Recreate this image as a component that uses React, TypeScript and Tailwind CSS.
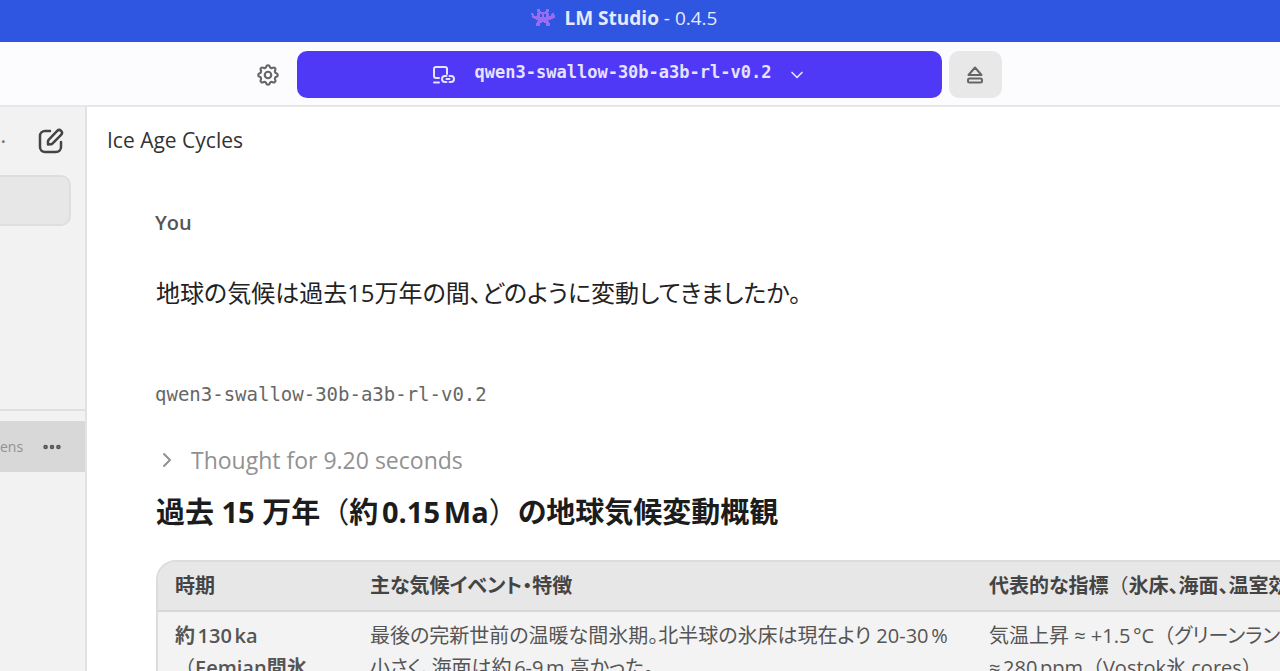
import { ChevronDown, ChevronRight, Ellipsis } from "lucide-react";
import { TbSettings } from "react-icons/tb";

const MODEL = "qwen3-swallow-30b-a3b-rl-v0.2";

function InvaderIcon() {
  return (
    <svg viewBox="0 0 24 18" className="h-[18px] w-6 text-[#9a6cf2]" fill="currentColor" aria-hidden="true">
      <path
        fillRule="evenodd"
        d="M6 0h3v2h1v1h4V2h1V0h3v3h-1v1h1v3h2V5h1V4h2v2h1v3h-2v1h-2v1h-3v1h1v2h1v3h-4v-3h-2v-1h-2v1h-2v3H5v-3h1v-2h1v-1H5v-1H3V9H1V6H0V4h2v1h1v2h3V4h1V3H6V0Zm3 5v3h2V5H9Zm4 0v3h2V5h-2Z"
      />
    </svg>
  );
}

function LinkedDeviceIcon() {
  return (
    <svg
      viewBox="0 0 24 20"
      className="h-5 w-6 shrink-0"
      fill="none"
      stroke="currentColor"
      strokeWidth="2"
      strokeLinecap="round"
      strokeLinejoin="round"
      aria-hidden="true"
    >
      <path d="M8 13H5a2 2 0 0 1-2-2V4a2 2 0 0 1 2-2h9a2 2 0 0 1 2 2v5" />
      <path d="M3 17.500h5" />
      <path d="M15.500 11H14a3 3 0 0 0 0 6h1.500M18.500 11H20a3 3 0 0 1 0 6h-1.500M15.500 14h3" />
    </svg>
  );
}

function ComposeIcon() {
  return (
    <svg
      viewBox="0 0 26 26"
      className="size-[26px]"
      fill="none"
      stroke="currentColor"
      strokeWidth="2.500"
      strokeLinecap="round"
      strokeLinejoin="round"
      aria-hidden="true"
    >
      <path d="M12 3H7a5 5 0 0 0-5 5v11a5 5 0 0 0 5 5h11a5 5 0 0 0 5-5v-5" />
      <path d="M10 16.500v-3.300a2 2 0 0 1 .6-1.400l8.600-8.900a2.700 2.700 0 0 1 3.900 3.900l-8.700 8.900a2 2 0 0 1-1.400.6Z" />
    </svg>
  );
}

function EjectIcon() {
  return (
    <svg
      viewBox="0 0 18 20"
      className="h-5 w-[18px]"
      fill="none"
      stroke="currentColor"
      strokeWidth="2"
      strokeLinejoin="round"
      aria-hidden="true"
    >
      <path d="M9 2.500 15.500 10h-13L9 2.500Z" />
      <rect x="2" y="13.500" width="14" height="4" rx="1.500" />
    </svg>
  );
}

// Proportional kana, while the brackets keep their full-width box.
function Jp({ children }: { children: string }) {
  return (
    <span className="[font-feature-settings:'palt']">
      {children.split(/([（）])/).map((part, i) =>
        part === "（" || part === "）" ? (
          <span key={i} className="font-normal [font-feature-settings:normal]">
            {part}
          </span>
        ) : (
          part
        ),
      )}
    </span>
  );
}

const rows = [
  {
    period: ["約\u202f130\u202fka", "（Eemian間氷", "期）"],
    events: ["最後の完新世前の温暖な間氷期。北半球の氷床は現在より 20-30\u202f%", "小さく、海面は約\u202f6-9\u202fm 高かった。"],
    metrics: ["気温上昇 ≈ +1.5\u202f°C（グリーンランド氷床）", "≈\u202f280\u202fppm（Vostok氷 cores）"],
  },
];

function Lines({ lines }: { lines: string[] }) {
  return (
    <>
      {lines.map((line) => (
        <span key={line} className="block">
          <Jp>{line}</Jp>
        </span>
      ))}
    </>
  );
}

function Sidebar() {
  return (
    <aside className="flex w-[87px] shrink-0 flex-col overflow-hidden border-r-2 border-[#e2e2e2] bg-[#f2f2f2]">
      <div className="flex h-[68px] items-center justify-between pr-[21px]">
        <span className="pl-px font-bold text-[#777]">·</span>
        <button type="button" aria-label="New chat" className="text-[#444]">
          <ComposeIcon />
        </button>
      </div>
      <div className="mr-3.5 h-[51px] rounded-r-[10px] border-2 border-l-0 border-[#dedede] bg-[#e7e7e7]" />
      <div className="mt-[183px] border-t-2 border-[#e0e0e0]" />
      <div className="mt-2.5 flex h-[51px] items-center justify-between bg-[#d8d8d8] pr-[22px]">
        <span className="text-sm text-[#929292]">ens</span>
        <button type="button" aria-label="Chat options" className="text-[#555]">
          <Ellipsis className="size-[22px]" strokeWidth={3} />
        </button>
      </div>
    </aside>
  );
}

export default function App() {
  return (
    <div className="flex h-screen flex-col overflow-hidden bg-white font-['Open_Sans','Noto_Sans_CJK_JP',sans-serif] text-[#333]">
      <header className="flex h-[42px] shrink-0 items-center justify-center gap-2.5 bg-[#2f56e0] pr-8 pb-1.5 text-[19px] text-[#e6e9ff]">
        <InvaderIcon />
        <h1>
          <span className="font-bold">LM Studio</span> - 0.4.5
        </h1>
      </header>

      <div className="flex h-[65px] shrink-0 items-center justify-center border-b-2 border-[#e6e6e6] bg-[#fcfbfd] pt-0.5 pr-6">
        <button type="button" aria-label="Settings" className="mr-4 text-[#666]">
          <TbSettings className="size-[26px]" />
        </button>
        <button
          type="button"
          className="flex h-[47px] max-w-[645px] flex-1 items-center justify-center rounded-[10px] bg-[#4f39f6] text-[#e5e3ff]"
        >
          <LinkedDeviceIcon />
          <span className="ml-5 pb-1 font-['DejaVu_Sans_Mono',monospace] text-[17px] font-bold">{MODEL}</span>
          <ChevronDown className="ml-4 size-5" strokeWidth={2} />
        </button>
        <button
          type="button"
          aria-label="Eject model"
          className="ml-[7px] flex h-[47px] w-[53px] items-center justify-center rounded-[10px] bg-[#e8e8e8] text-[#666]"
        >
          <EjectIcon />
        </button>
      </div>

      <div className="flex min-h-0 flex-1">
        <Sidebar />
        <main className="min-w-0 flex-1 overflow-hidden">
          <h2 className="flex h-[68px] items-center pl-5 text-[21px]">Ice Age Cycles</h2>

          <div className="pl-[68px]">
            <section className="pt-8">
              <h3 className="text-xl leading-8 font-semibold text-[#555]">You</h3>
              <p className="mt-[34px] pl-px text-2xl leading-10 whitespace-nowrap text-[#222]">
                <Jp>地球の気候は過去15万年の間、どのように変動してきましたか。</Jp>
              </p>
            </section>

            <section className="pt-[65px]">
              <h3 className="font-['DejaVu_Sans_Mono',monospace] text-[19px] leading-8 text-[#666]">{MODEL}</h3>
              <button type="button" className="mt-8 flex items-center gap-3 text-[23px] leading-9 text-[#919191]">
                <ChevronRight className="size-6" strokeWidth={2} />
                Thought for 9.20 seconds
              </button>
              <h2 className="mt-3.5 pl-px text-[29px] leading-10 font-bold whitespace-nowrap text-[#1c1c1c]">
                <Jp>{"過去 15 万年（約\u202f0.15\u202fMa）の地球気候変動概観"}</Jp>
              </h2>

              <div className="mt-7 ml-px w-[1500px] overflow-hidden rounded-tl-[20px] border-2 border-[#dcdcdc] bg-[#f3f3f3]">
                <table className="w-full table-fixed text-left text-xl leading-8 whitespace-nowrap text-[#555]">
                  <thead className="border-b-2 border-[#d8d8d8] bg-[#e7e7e7] text-[#444]">
                    <tr>
                      <th className="w-[195px] px-[17px] py-2 font-bold">時期</th>
                      <th className="w-[619px] px-[17px] py-2 font-bold">
                        <Jp>主な気候イベント・特徴</Jp>
                      </th>
                      <th className="px-[17px] py-2 font-bold">
                        <Jp>代表的な指標（氷床、海面、温室効果ガス）</Jp>
                      </th>
                    </tr>
                  </thead>
                  <tbody>
                    {rows.map((row) => (
                      <tr key={row.period[0]} className="align-top">
                        <th scope="row" className="px-[17px] py-2 font-semibold">
                          <Lines lines={row.period} />
                        </th>
                        <td className="px-[17px] py-2">
                          <Lines lines={row.events} />
                        </td>
                        <td className="px-[17px] py-2">
                          <Lines lines={row.metrics} />
                        </td>
                      </tr>
                    ))}
                  </tbody>
                </table>
              </div>
            </section>
          </div>
        </main>
      </div>
    </div>
  );
}
